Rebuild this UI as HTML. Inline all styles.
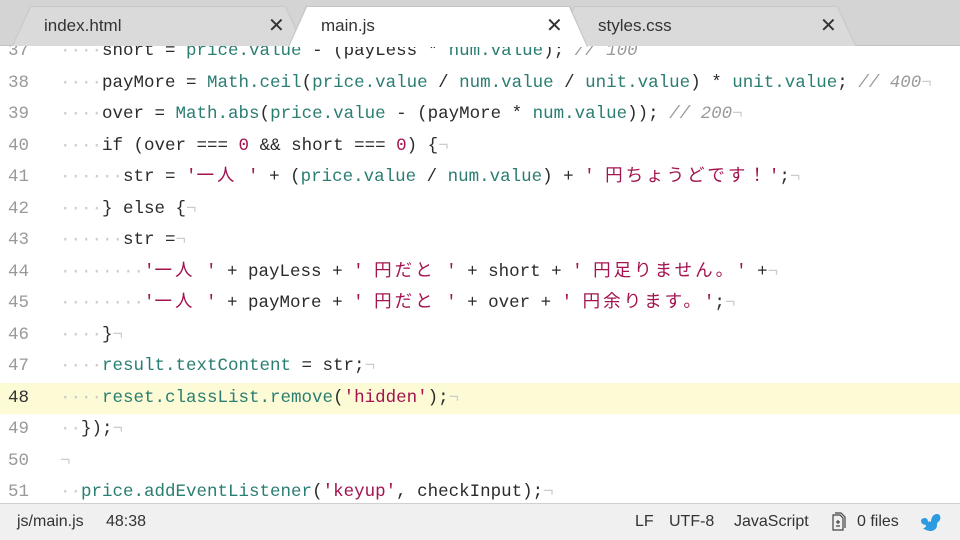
<!DOCTYPE html>
<html><head><meta charset="utf-8"><style>
*{margin:0;padding:0;box-sizing:border-box}
body{width:960px;height:540px;overflow:hidden;background:#fff;position:relative;font-family:"Liberation Sans","Noto Sans CJK JP",sans-serif}
.tabbar{position:absolute;left:0;top:0;width:960px;height:46px;background:#d4d4d4;border-bottom:1px solid #c4c4c4;z-index:3}
.tab{position:absolute;top:6px;height:40px;clip-path:polygon(0 100%,18px 0,calc(100% - 18px) 0,100% 100%);}
.tab .b{position:absolute;inset:0;}
.tab span{position:absolute;top:10px;font-size:17px;color:#333}
.tab i{position:absolute;top:7px;font-style:normal;font-size:20px;color:#333}
.code{position:absolute;left:0;top:36px;width:960px;font-family:"Liberation Mono","Noto Sans CJK JP",monospace;font-size:17.5px;color:#2b2b2b}
.l{position:relative;height:31.5px;line-height:31.5px;white-space:pre}
.l .n{position:absolute;left:8px;color:#999;}
.l .c{position:absolute;left:60px}
.hl{background:#fcfbd6}
.d{color:#ccc}.g{color:#2a7d72}.s{color:#a3134f}.m{color:#999;font-style:italic}
.j{letter-spacing:3px}
.status{position:absolute;left:0;top:503px;width:960px;height:37px;background:#f0f0f0;border-top:1px solid #d0d0d0;font-size:16px;color:#333}
.status span{position:absolute;top:9px}
</style></head><body>
<div class="tabbar">
 <div class="tab" style="left:12px;width:292px;background:#c9c9c9"><div class="b" style="left:1px;right:1px;top:1px;background:#dadada;clip-path:polygon(0 100%,18px 0,calc(100% - 18px) 0,100% 100%)"></div><span style="left:32px">index.html</span><i style="left:256px">✕</i></div>
 <div class="tab" style="left:556px;width:300px;background:#c9c9c9"><div class="b" style="left:1px;right:1px;top:1px;background:#dadada;clip-path:polygon(0 100%,18px 0,calc(100% - 18px) 0,100% 100%)"></div><span style="left:42px">styles.css</span><i style="left:264px">✕</i></div>
 <div class="tab" style="left:288px;width:300px;height:41px;background:#c4c4c4"><div class="b" style="left:1px;right:1px;top:1px;background:#fff;clip-path:polygon(0 100%,18px 0,calc(100% - 18px) 0,100% 100%)"></div><span style="left:33px">main.js</span><i style="left:258px">✕</i></div>
</div>
<div class="code">
<div class="l"><span class="n">37</span><span class="c"><span class="d">····</span>short = <span class="g">price.value</span> - (payLess * <span class="g">num.value</span>); <span class="m">// 100</span></span></div>
<div class="l"><span class="n">38</span><span class="c"><span class="d">····</span>payMore = <span class="g">Math.ceil</span>(<span class="g">price.value</span> / <span class="g">num.value</span> / <span class="g">unit.value</span>) * <span class="g">unit.value</span>; <span class="m">// 400</span><span class="d">¬</span></span></div>
<div class="l"><span class="n">39</span><span class="c"><span class="d">····</span>over = <span class="g">Math.abs</span>(<span class="g">price.value</span> - (payMore * <span class="g">num.value</span>)); <span class="m">// 200</span><span class="d">¬</span></span></div>
<div class="l"><span class="n">40</span><span class="c"><span class="d">····</span>if (over === <span class="s">0</span> &amp;&amp; short === <span class="s">0</span>) {<span class="d">¬</span></span></div>
<div class="l"><span class="n">41</span><span class="c"><span class="d">······</span>str = <span class="s">'<span class="j">一人</span> '</span> + (<span class="g">price.value</span> / <span class="g">num.value</span>) + <span class="s">' <span class="j">円ちょうどです！</span>'</span>;<span class="d">¬</span></span></div>
<div class="l"><span class="n">42</span><span class="c"><span class="d">····</span>} else {<span class="d">¬</span></span></div>
<div class="l"><span class="n">43</span><span class="c"><span class="d">······</span>str =<span class="d">¬</span></span></div>
<div class="l"><span class="n">44</span><span class="c"><span class="d">········</span><span class="s">'<span class="j">一人</span> '</span> + payLess + <span class="s">' <span class="j">円だと</span> '</span> + short + <span class="s">' <span class="j">円足りません。</span>'</span> +<span class="d">¬</span></span></div>
<div class="l"><span class="n">45</span><span class="c"><span class="d">········</span><span class="s">'<span class="j">一人</span> '</span> + payMore + <span class="s">' <span class="j">円だと</span> '</span> + over + <span class="s">' <span class="j">円余ります。</span>'</span>;<span class="d">¬</span></span></div>
<div class="l"><span class="n">46</span><span class="c"><span class="d">····</span>}<span class="d">¬</span></span></div>
<div class="l"><span class="n">47</span><span class="c"><span class="d">····</span><span class="g">result.textContent</span> = str;<span class="d">¬</span></span></div>
<div class="l hl"><span class="n" style="color:#333">48</span><span class="c"><span class="d">····</span><span class="g">reset.classList.remove</span>(<span class="s">'hidden'</span>);<span class="d">¬</span></span></div>
<div class="l"><span class="n">49</span><span class="c"><span class="d">··</span>});<span class="d">¬</span></span></div>
<div class="l"><span class="n">50</span><span class="c"><span class="d">¬</span></span></div>
<div class="l"><span class="n">51</span><span class="c"><span class="d">··</span><span class="g">price.addEventListener</span>(<span class="s">'keyup'</span>, checkInput);<span class="d">¬</span></span></div>
</div>
<div class="status">
 <span style="left:17px">js/main.js</span><span style="left:106px">48:38</span>
 <span style="left:635px">LF</span><span style="left:669px">UTF-8</span><span style="left:734px">JavaScript</span>
 <svg style="position:absolute;left:830px;top:8px" width="16" height="20" viewBox="0 0 16 20"><path d="M3 3h7l3 3v12H3z M5 1h6l4 4v11" fill="none" stroke="#444" stroke-width="1.2"/><path d="M6 10h4M8 8v4M6 14h4" stroke="#444" stroke-width="1.2"/></svg>
 <span style="left:857px">0 files</span>
 <svg style="position:absolute;left:918px;top:7px" width="24" height="22" viewBox="0 0 24 22"><path d="M14 20c-4 0-7-1-9-3 2 0 3-1 3-3-3 0-5-2-5-4s2-3 4-3c2 0 3 2 3 4 1-1 2-1 3 0 0-4 2-8 6-8 3 0 4 3 3 6-1 2-3 2-3 4 0 3 0 5-5 7z" fill="#2d9be0"/></svg>
</div>
</body></html>
